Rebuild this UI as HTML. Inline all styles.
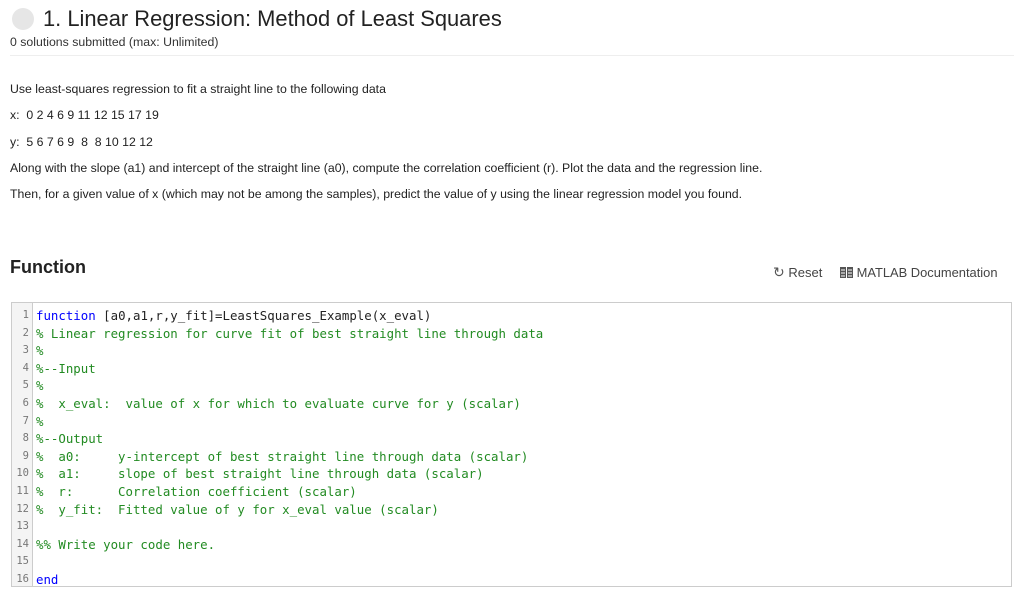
<!DOCTYPE html>
<html><head><style>
body{margin:0;background:#fff;font-family:"Liberation Sans",Arial,sans-serif;color:#222;width:1024px;height:599px;overflow:hidden;position:relative}
.a{position:absolute;white-space:nowrap}
.circ{left:12px;top:8px;width:22px;height:22px;border-radius:50%;background:#e6e6e6}
.p{font-size:12.3px;left:10px;color:#222}
.ed{position:absolute;left:11px;top:302px;width:1001px;height:285px;border:1px solid #ccc;box-sizing:border-box}
.gut{position:absolute;left:0;top:0;width:20px;height:100%;background:#f4f4f4;border-right:1px solid #ccc}
.code{position:absolute;left:0;top:4px;font-family:"DejaVu Sans Mono","Liberation Mono",monospace;font-size:12.4px;line-height:17.6px;white-space:pre}
.c{color:#228b22}.k{color:#0000ff}
</style></head><body>
<div class="a circ"></div>
<div class="a" style="left:43px;top:6px;font-size:21.9px;color:#222">1. Linear Regression: Method of Least Squares</div>
<div class="a" style="left:10px;top:35px;font-size:12.3px;color:#333">0 solutions submitted (max: Unlimited)</div>
<div class="a" style="left:10px;top:55px;width:1004px;height:1px;background:#eee"></div>
<div class="a p" style="top:82px">Use least-squares regression to fit a straight line to the following data</div>
<div class="a p" style="top:108px">x:&nbsp; 0 2 4 6 9 11 12 15 17 19</div>
<div class="a p" style="top:135px">y:&nbsp; 5 6 7 6 9&nbsp; 8&nbsp; 8 10 12 12</div>
<div class="a p" style="top:161px">Along with the slope (a1) and intercept of the straight line (a0), compute the correlation coefficient (r). Plot the data and the regression line.</div>
<div class="a p" style="top:187px">Then, for a given value of x (which may not be among the samples), predict the value of y using the linear regression model you found.</div>
<div class="a" style="left:10px;top:257px;font-size:18px;font-weight:bold;color:#222">Function</div>
<div class="a" style="left:773px;top:264px;font-size:13px;color:#444"><span style="font-size:14px;color:#555">&#x21BB;</span> Reset</div>
<div class="a" style="left:840px;top:265px;font-size:12.9px;color:#444"><svg width="13" height="11" style="vertical-align:-1px"><rect x="0" y="0" width="6" height="11" fill="#555"/><rect x="7" y="0" width="6" height="11" fill="#555"/><path d="M1 3h4M1 6h4M1 9h4M8 3h4M8 6h4M8 9h4" stroke="#fff" stroke-width="1"/></svg> MATLAB Documentation</div>
<div class="ed"><div class="gut"></div>
<div class="code"><div style="position:absolute;left:0;top:0;color:#777;font-size:10.5px;width:17px;text-align:right;line-height:17.6px">1<br>2<br>3<br>4<br>5<br>6<br>7<br>8<br>9<br>10<br>11<br>12<br>13<br>14<br>15<br>16</div><div style="position:absolute;left:24px;top:0"><span class="k">function</span> [a0,a1,r,y_fit]=LeastSquares_Example(x_eval)
<span class="c">% Linear regression for curve fit of best straight line through data</span>
<span class="c">%</span>
<span class="c">%--Input</span>
<span class="c">%</span>
<span class="c">%  x_eval:  value of x for which to evaluate curve for y (scalar)</span>
<span class="c">%</span>
<span class="c">%--Output</span>
<span class="c">%  a0:     y-intercept of best straight line through data (scalar)</span>
<span class="c">%  a1:     slope of best straight line through data (scalar)</span>
<span class="c">%  r:      Correlation coefficient (scalar)</span>
<span class="c">%  y_fit:  Fitted value of y for x_eval value (scalar)</span>

<span class="c">%% Write your code here.</span>

<span class="k">end</span></div></div></div>
</body></html>
